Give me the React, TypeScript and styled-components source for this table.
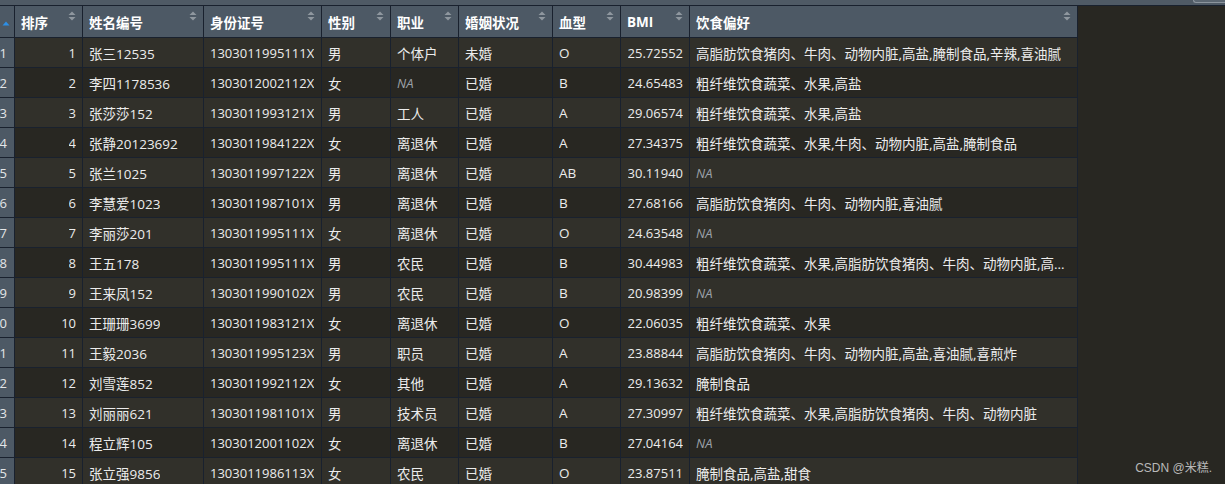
import React from "react";
import styled, { createGlobalStyle } from "styled-components";

const Global = createGlobalStyle`
  html, body { margin: 0; padding: 0; background: #282722; }
  body { font-family: "Open Sans", "Noto Sans CJK SC", sans-serif; font-size: 13px; color: #e8e8e8; }
  * { box-sizing: border-box; }
`;

const LINE = "#19212e";
const HEAD = "#4d5965";

const Page = styled.div`
  position: relative;
  width: 1225px;
  height: 484px;
  overflow: hidden;
  background: #282722;
`;

const TopStrip = styled.div`
  height: 6px;
  background: #4f5a65;
  border-bottom: 1px solid ${LINE};
  display: flex;
  justify-content: flex-end;
`;

const ScrollStub = styled.div`
  width: 32px;
  height: 3px;
  background: #5c6772;
  border: 1px solid #8c959e;
  border-top: none;
  border-right: none;
  border-bottom-left-radius: 4px;
`;

const Table = styled.div`
  width: 1078px;
  display: flex;
  flex-direction: column;
`;

const Row = styled.div<{ $odd?: boolean }>`
  display: flex;
  height: 30px;
  background: ${(p) => (p.$odd ? "#31302a" : "#282722")};
  border-bottom: 1px solid ${LINE};
`;

const HeadRow = styled.div`
  display: flex;
  height: 32px;
  background: ${HEAD};
  border-bottom: 1px solid ${LINE};
`;

const Cell = styled.div<{ $w: number; $right?: boolean; $num?: boolean }>`
  width: ${(p) => p.$w}px;
  flex: none;
  border-right: 1px solid ${LINE};
  padding: 0 6px;
  display: flex;
  align-items: center;
  justify-content: ${(p) => (p.$right ? "flex-end" : "flex-start")};
  overflow: hidden;
  white-space: nowrap;
  color: #ececec;
  font-size: ${(p) => (p.$num ? "13px" : "13.5px")};
`;

const Ellip = styled.span`
  display: block;
  overflow: hidden;
  text-overflow: ellipsis;
  white-space: nowrap;
  min-width: 0;
`;

const NA = styled.span`
  font-style: italic;
  font-size: 13px;
  color: #9ba1a8;
`;

const IndexCell = styled.div`
  width: 15px;
  flex: none;
  background: ${HEAD};
  border-right: 1px solid ${LINE};
  display: flex;
  align-items: center;
  justify-content: flex-end;
  padding-right: 7px;
  overflow: hidden;
  white-space: nowrap;
  color: #e4e6e8;
`;

const HeadIndex = styled.div`
  width: 15px;
  flex: none;
  border-right: 1px solid ${LINE};
  padding: 7px 0 0 2px;
`;

const HeadCell = styled.div<{ $w: number }>`
  width: ${(p) => p.$w}px;
  flex: none;
  border-right: 1px solid ${LINE};
  padding: 0 6px;
  display: flex;
  align-items: center;
  font-weight: 700;
  font-size: 13.5px;
  color: #ffffff;
  white-space: nowrap;
  overflow: hidden;
`;

const HeadText = styled.span`
  flex: 1;
  min-width: 0;
`;

const SortBox = styled.span`
  align-self: flex-start;
  margin-top: 5px;
  display: flex;
`;

const Watermark = styled.div`
  position: absolute;
  right: 13px;
  bottom: 9px;
  font-family: "Liberation Sans", "Noto Sans CJK SC", sans-serif;
  font-size: 12px;
  color: #b9b9b9;
`;

const SortIcon = () => (
  <svg width="8" height="10" viewBox="0 0 8 10">
    <path d="M4 0.5 L7.5 4 L0.5 4 Z" fill="#8f979f" />
    <path d="M4 9.5 L7.5 6 L0.5 6 Z" fill="#8f979f" />
  </svg>
);

const BlueUp = () => (
  <svg width="8" height="6" viewBox="0 0 8 6">
    <path d="M4 0.5 L7.5 4.5 L0.5 4.5 Z" fill="#2d8fe6" />
  </svg>
);

const widths = [68, 121, 118, 69, 68, 94, 68, 69, 388];
const headers = ["排序", "姓名编号", "身份证号", "性别", "职业", "婚姻状况", "血型", "BMI", "饮食偏好"];

type R = [string, string, string, string, string | null, string, string, string, string | null];

const rows: R[] = [
  ["1", "张三12535", "1303011995111X", "男", "个体户", "未婚", "O", "25.72552", "高脂肪饮食猪肉、牛肉、动物内脏,高盐,腌制食品,辛辣,喜油腻"],
  ["2", "李四1178536", "1303012002112X", "女", null, "已婚", "B", "24.65483", "粗纤维饮食蔬菜、水果,高盐"],
  ["3", "张莎莎152", "1303011993121X", "男", "工人", "已婚", "A", "29.06574", "粗纤维饮食蔬菜、水果,高盐"],
  ["4", "张静20123692", "1303011984122X", "女", "离退休", "已婚", "A", "27.34375", "粗纤维饮食蔬菜、水果,牛肉、动物内脏,高盐,腌制食品"],
  ["5", "张兰1025", "1303011997122X", "男", "离退休", "已婚", "AB", "30.11940", null],
  ["6", "李慧爱1023", "1303011987101X", "男", "离退休", "已婚", "B", "27.68166", "高脂肪饮食猪肉、牛肉、动物内脏,喜油腻"],
  ["7", "李丽莎201", "1303011995111X", "女", "离退休", "已婚", "O", "24.63548", null],
  ["8", "王五178", "1303011995111X", "男", "农民", "已婚", "B", "30.44983", "粗纤维饮食蔬菜、水果,高脂肪饮食猪肉、牛肉、动物内脏,高盐,腌制食品"],
  ["9", "王来凤152", "1303011990102X", "男", "农民", "已婚", "B", "20.98399", null],
  ["10", "王珊珊3699", "1303011983121X", "女", "离退休", "已婚", "O", "22.06035", "粗纤维饮食蔬菜、水果"],
  ["11", "王毅2036", "1303011995123X", "男", "职员", "已婚", "A", "23.88844", "高脂肪饮食猪肉、牛肉、动物内脏,高盐,喜油腻,喜煎炸"],
  ["12", "刘雪莲852", "1303011992112X", "女", "其他", "已婚", "A", "29.13632", "腌制食品"],
  ["13", "刘丽丽621", "1303011981101X", "男", "技术员", "已婚", "A", "27.30997", "粗纤维饮食蔬菜、水果,高脂肪饮食猪肉、牛肉、动物内脏"],
  ["14", "程立辉105", "1303012001102X", "女", "离退休", "已婚", "B", "27.04164", null],
  ["15", "张立强9856", "1303011986113X", "女", "农民", "已婚", "O", "23.87511", "腌制食品,高盐,甜食"],
];

const rightCols = new Set([0, 7]);
const numCols = new Set([0, 2, 7]);

export default function App() {
  return (
    <Page>
      <Global />
      <TopStrip>
        <ScrollStub />
      </TopStrip>
      <Table>
        <HeadRow>
          <HeadIndex>
            <BlueUp />
          </HeadIndex>
          {headers.map((h, i) => (
            <HeadCell key={h} $w={widths[i]}>
              <HeadText>{h}</HeadText>
              <SortBox>
                <SortIcon />
              </SortBox>
            </HeadCell>
          ))}
        </HeadRow>
        {rows.map((r, ri) => (
          <Row key={ri} $odd={ri % 2 === 0}>
            <IndexCell>{r[0]}</IndexCell>
            {r.map((v, ci) => (
              <Cell key={ci} $w={widths[ci]} $right={rightCols.has(ci)} $num={numCols.has(ci)}>
                {v === null ? <NA>NA</NA> : <Ellip>{v}</Ellip>}
              </Cell>
            ))}
          </Row>
        ))}
      </Table>
      <Watermark>CSDN @米糕.</Watermark>
    </Page>
  );
}
